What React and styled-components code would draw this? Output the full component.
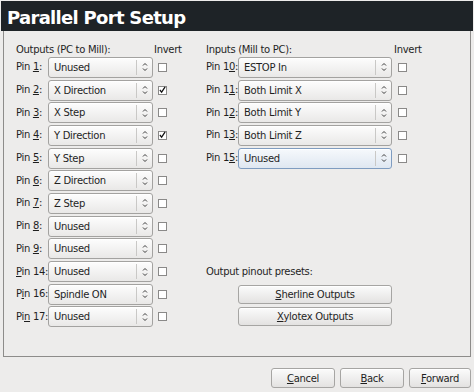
import React from "react";
import styled, { createGlobalStyle } from "styled-components";

const Global = createGlobalStyle`
  html, body { margin: 0; padding: 0; background: #edeceb; }
  body { font-family: "DejaVu Sans", "Liberation Sans", sans-serif; color: #1f1f1f; }
  * { box-sizing: border-box; }
`;

const Window = styled.div`
  width: 474px;
  height: 392px;
  background: #edeceb;
  overflow: hidden;
`;

const TitleBar = styled.div`
  margin: 1px 1px 0 1px;
  height: 30px;
  background: #1e2327;
  color: #ffffff;
  font-family: "DejaVu Sans", sans-serif;
  font-weight: bold;
  font-size: 18px;
  letter-spacing: -0.7px;
  line-height: 26px;
  padding: 4px 0 0 6px;
  white-space: nowrap;
`;

const Frame = styled.div`
  margin: 0 3px;
  height: 326px;
  border: 1px solid #8d8c8a;
  border-top: none;
  padding: 12px 0 0 12px;
  display: flex;
  font-size: 10px;
  letter-spacing: -0.3px;
`;

const Column = styled.div`
  width: ${(p) => p.$width}px;
  display: grid;
  grid-template-columns: 32px ${(p) => p.$combo}px auto;
  grid-template-rows: 13px repeat(12, 22.7px);
  align-items: center;
`;

const Heading = styled.div`
  grid-column: ${(p) => p.$col};
  margin-left: ${(p) => p.$ml || 0}px;
  white-space: nowrap;
  line-height: 13px;
`;

const PinLabel = styled.div`
  white-space: nowrap;
  line-height: 12px;
`;

const U = styled.span`
  text-decoration: underline;
  text-underline-offset: 1px;
`;

const Combo = styled.div`
  position: relative;
  height: 21px;
  border: 1px solid ${(p) => (p.$focus ? "#7f9cc0" : "#a3a2a0")};
  border-radius: 3px;
  background: ${(p) =>
    p.$focus
      ? "linear-gradient(#f6f9fc, #dfe7f1)"
      : "linear-gradient(#fdfdfd, #e9e8e7)"};
  display: flex;
  align-items: center;
  padding-left: 5px;
  white-space: nowrap;
  box-shadow: inset 0 1px 0 rgba(255,255,255,0.9);
`;

const ComboText = styled.span`
  flex: 1;
`;

const ComboButton = styled.span`
  width: 16px;
  height: 100%;
  border-left: 1px solid #c9c8c6;
  display: flex;
  align-items: center;
  justify-content: center;
  height: 15px;
`;

const CheckCell = styled.div`
  margin-left: ${(p) => p.$ml}px;
  width: 9px;
  height: 9px;
  border: 1px solid #8a8988;
  background: #ffffff;
  display: flex;
  align-items: center;
  justify-content: center;
`;

const PresetLabel = styled.div`
  grid-column: 1 / 3;
  grid-row: 11;
  white-space: nowrap;
  line-height: 12px;
`;

const Button = styled.div`
  height: ${(p) => p.$h || 19}px;
  width: ${(p) => (p.$w ? p.$w + "px" : "auto")};
  border: 1px solid #a6a5a3;
  border-radius: 3px;
  background: linear-gradient(#fbfbfb, #e3e2e1);
  display: flex;
  align-items: center;
  justify-content: center;
  white-space: nowrap;
  box-shadow: inset 0 1px 0 #ffffff;
`;

const PresetButton = styled(Button)`
  grid-column: 2;
  grid-row: ${(p) => p.$row};
`;

const Footer = styled.div`
  display: flex;
  justify-content: flex-end;
  gap: 5px;
  padding: 11px 3px 0 0;
  font-size: 10px;
  letter-spacing: -0.3px;
`;

const Arrows = () => (
  <svg width="6" height="10" viewBox="0 0 6 10">
    <polyline points="1,3.5 3,1.5 5,3.5" fill="none" stroke="#3a3a3a" strokeWidth="1" />
    <polyline points="1,6.5 3,8.5 5,6.5" fill="none" stroke="#3a3a3a" strokeWidth="1" />
  </svg>
);

const Check = () => (
  <svg width="8" height="8" viewBox="0 0 8 8">
    <polyline points="1,4 3,6.5 7,0.5" fill="none" stroke="#111" strokeWidth="1.4" />
  </svg>
);

const Label = ({ parts }) => (
  <PinLabel>
    {parts[0]}
    <U>{parts[1]}</U>
    {parts[2]}
  </PinLabel>
);

const leftRows = [
  { l: ["Pin ", "1", ":"], v: "Unused" },
  { l: ["Pin ", "2", ":"], v: "X Direction", c: true },
  { l: ["Pin ", "3", ":"], v: "X Step" },
  { l: ["Pin ", "4", ":"], v: "Y Direction", c: true },
  { l: ["Pin ", "5", ":"], v: "Y Step" },
  { l: ["Pin ", "6", ":"], v: "Z Direction" },
  { l: ["Pin ", "7", ":"], v: "Z Step" },
  { l: ["Pin ", "8", ":"], v: "Unused" },
  { l: ["Pin ", "9", ":"], v: "Unused" },
  { l: ["", "P", "in 14:"], v: "Unused" },
  { l: ["P", "i", "n 16:"], v: "Spindle ON" },
  { l: ["Pi", "n", " 17:"], v: "Unused" },
];

const rightRows = [
  { l: ["Pin 1", "0", ":"], v: "ESTOP In" },
  { l: ["Pin 1", "1", ":"], v: "Both Limit X" },
  { l: ["Pin 1", "2", ":"], v: "Both Limit Y" },
  { l: ["Pin 1", "3", ":"], v: "Both Limit Z" },
  { l: ["Pin 1", "5", ":"], v: "Unused", f: true },
];

const PinRow = ({ row, checkMl }) => (
  <>
    <Label parts={row.l} />
    <Combo $focus={row.f}>
      <ComboText>{row.v}</ComboText>
      <ComboButton>
        <Arrows />
      </ComboButton>
    </Combo>
    <CheckCell $ml={checkMl}>{row.c ? <Check /> : null}</CheckCell>
  </>
);

export default function App() {
  return (
    <Window>
      <Global />
      <TitleBar>Parallel Port Setup</TitleBar>
      <Frame>
        <Column $width={190} $combo={105}>
          <Heading $col="1 / 3">Outputs (PC to Mill):</Heading>
          <Heading $col="3" $ml={1}>Invert</Heading>
          {leftRows.map((r, i) => (
            <PinRow key={i} row={r} checkMl={5} />
          ))}
        </Column>
        <Column $width={230} $combo={154}>
          <Heading $col="1 / 3">Inputs (Mill to PC):</Heading>
          <Heading $col="3" $ml={2}>Invert</Heading>
          {rightRows.map((r, i) => (
            <PinRow key={i} row={r} checkMl={6} />
          ))}
          <PresetLabel>Output pinout presets:</PresetLabel>
          <PresetButton $row={12}>
            <span><U>S</U>herline Outputs</span>
          </PresetButton>
          <PresetButton $row={13}>
            <span><U>X</U>ylotex Outputs</span>
          </PresetButton>
        </Column>
      </Frame>
      <Footer>
        <Button $w={64} $h={20}><span><U>C</U>ancel</span></Button>
        <Button $w={64} $h={20}><span><U>B</U>ack</span></Button>
        <Button $w={62} $h={20}><span><U>F</U>orward</span></Button>
      </Footer>
    </Window>
  );
}
